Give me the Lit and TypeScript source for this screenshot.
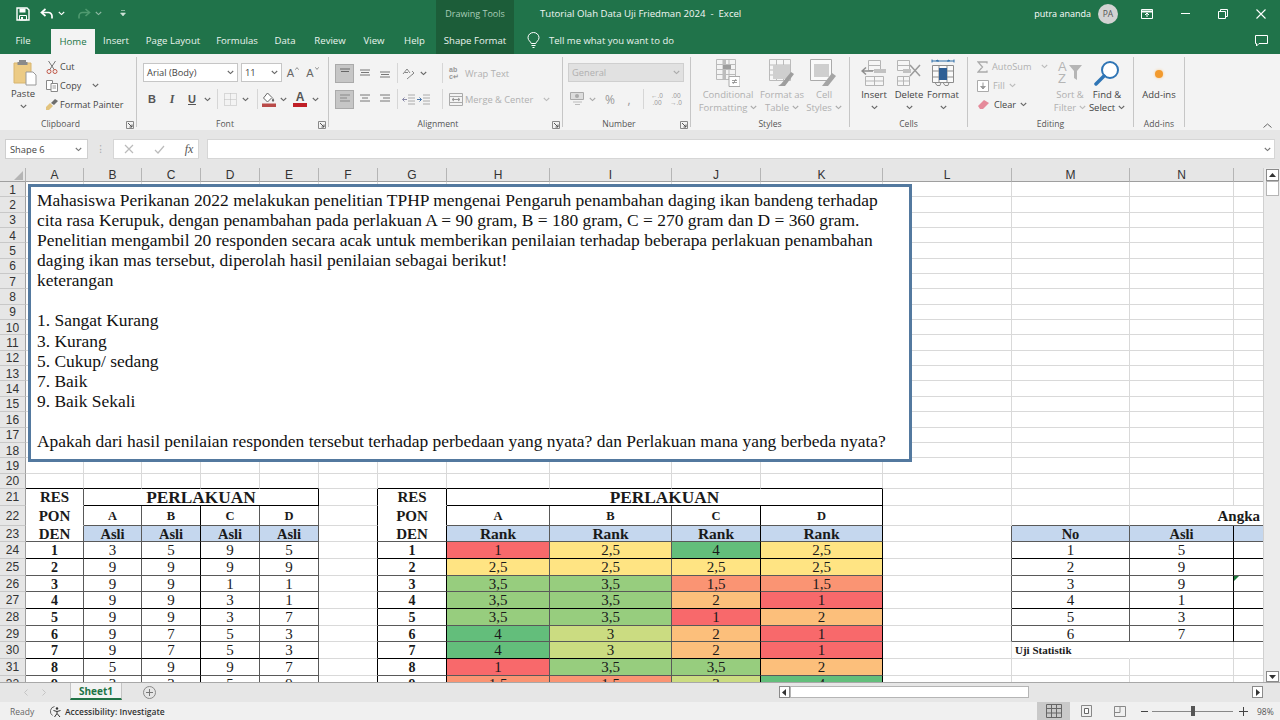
import { LitElement, html, svg, css, nothing } from 'lit';
import { customElement } from 'lit/decorators.js';

const chev = (c = '#666') => html`<svg width="7" height="5" viewBox="0 0 7 5"><path d="M.8 1l2.7 2.6L6.2 1" fill="none" stroke="${c}" stroke-width="1.1"/></svg>`;
const lines = (ys: number[], x1: number[], x2: number[], c = '#777') => html`<svg width="14" height="12" viewBox="0 0 14 12">${ys.map((y, i) => svg`<path d="M${x1[i]} ${y}H${x2[i]}" stroke="${c}" stroke-width="1"/>`)}</svg>`;
const launcher = html`<svg class="launch" width="8" height="8" viewBox="0 0 8 8"><path d="M.5 7.5V.5h7v7z" fill="none" stroke="#888"/><path d="M2 2l4 4M6 3.5V6H3.5" fill="none" stroke="#555"/></svg>`;

const ic = {
  save: html`<svg width="14" height="14" viewBox="0 0 14 14"><path d="M1 1h10l2 2v10H1z" fill="none" stroke="#fff" stroke-width="1.4"/><path d="M3.5 1.5h6v4h-6z" fill="#fff"/><path d="M3.5 8.5h7V13h-7z" fill="none" stroke="#fff"/><path d="M5 10h2v2.5H5z" fill="#fff"/></svg>`,
  undo: html`<svg width="14" height="12" viewBox="0 0 14 12"><path d="M5.5 1L1.5 4.5l4 3.5" fill="none" stroke="#fff" stroke-width="1.7"/><path d="M2 4.5h6.5a3.5 3.5 0 0 1 3.5 3.5v2.5" fill="none" stroke="#fff" stroke-width="1.7"/></svg>`,
  redo: html`<svg width="14" height="12" viewBox="0 0 14 12"><path d="M8.5 1l4 3.5-4 3.5" fill="none" stroke="#4f9a70" stroke-width="1.6"/><path d="M12 4.5H5.5A3.5 3.5 0 0 0 2 8v2.5" fill="none" stroke="#4f9a70" stroke-width="1.6"/></svg>`,
  qat: html`<svg width="6" height="7" viewBox="0 0 6 7"><path d="M1 .5h4M.5 3l2.5 3 2.5-3z" fill="#cfe3d7" stroke="#cfe3d7" stroke-width=".6"/></svg>`,
  bulb: html`<svg width="13" height="17" viewBox="0 0 13 17"><path d="M4.2 11.5C3.8 9.5 1 8.500 1 5.700A5.500 5.200 0 0 1 12 5.700C12 8.500 9.200 9.500 8.800 11.500z" fill="none" stroke="#fff" stroke-width="1"/><path d="M4.500 13.500h4M5.500 15.500h2" stroke="#fff" stroke-width="1"/></svg>`,
  ribbon: html`<svg width="12" height="10" viewBox="0 0 12 10"><path d="M.5.500h11v9H.500z" fill="none" stroke="#fff"/><path d="M.5 2.500h11" stroke="#fff" stroke-width="2"/><path d="M6 8V4.500M4 6l2-2 2 2" fill="none" stroke="#fff"/></svg>`,
  restore: html`<svg width="10" height="10" viewBox="0 0 10 10"><path d="M.5 2.500h7v7h-7zM2.500 2.500v-2h7v7h-2" fill="none" stroke="#fff"/></svg>`,
  close: html`<svg width="10" height="10" viewBox="0 0 10 10"><path d="M.5.500l9 9M9.500.500l-9 9" stroke="#fff" stroke-width="1.100"/></svg>`,
  comment: html`<svg width="13" height="12" viewBox="0 0 13 12"><path d="M.5.500h12v8H4l-2.500 2.500V8.500h-1z" fill="none" stroke="#fff"/></svg>`,
  paste: html`<svg width="24" height="27" viewBox="0 0 24 27"><path d="M1 4h17v20H1z" fill="#eccb85" stroke="#d8b56f"/><path d="M6 3h7V1H6zM4.500 3h10v3h-10z" fill="#8a8a8a"/><path d="M13 13h7l3 3v10H13z" fill="#fff" stroke="#999"/></svg>`,
  cut: html`<svg width="12" height="14" viewBox="0 0 12 14"><path d="M2.500 1l6 9M9.500 1l-6 9" stroke="#777" fill="none"/><circle cx="3" cy="11.500" r="2" fill="none" stroke="#c05a4a"/><circle cx="9" cy="11.500" r="2" fill="none" stroke="#c05a4a"/></svg>`,
  copy: html`<svg width="12" height="13" viewBox="0 0 12 13"><path d="M.5 1.500h6v9h-6z" fill="#fff" stroke="#888"/><path d="M5 4.500h6.500v8H5z" fill="#fff" stroke="#888"/><path d="M6.500 7h3.500M6.500 9h3.500" stroke="#999"/></svg>`,
  painter: html`<svg width="14" height="13" viewBox="0 0 14 13"><path d="M1 9l4-4 3 3-4 4H1z" fill="#e2c37e"/><path d="M6 5l4-4 3 2-4 4z" fill="#6d6d6d"/></svg>`,
  border: html`<svg width="13" height="13" viewBox="0 0 13 13"><path d="M.5.500h12v12H.500zM6.500.500v12M.5 6.500h12" fill="none" stroke="#bbb" stroke-dasharray="1 1"/></svg>`,
  fill: html`<svg width="14" height="15" viewBox="0 0 14 15"><path d="M5.500 1L1.500 6l4 4 4.500-4.500z" fill="#fff" stroke="#666"/><path d="M11 6c.8 1.200 1.200 2 1.200 2.600a1.100 1.100 0 0 1-2.300 0C9.900 8 10.300 7.200 11 6z" fill="#666"/><path d="M0 11.500h14V15H0z" fill="#b94a48"/></svg>`,
  sum: html`<svg width="11" height="12" viewBox="0 0 11 12"><path d="M10 2.500V1H1l4.500 5L1 11h9V9.500" fill="none" stroke="#aaa" stroke-width="1.300"/></svg>`,
  fillDown: html`<svg width="12" height="12" viewBox="0 0 12 12"><path d="M.5.500h11v11H.500z" fill="#fff" stroke="#aaa"/><path d="M6 2.500v6M3.500 6L6 9l2.500-3" fill="#999" stroke="#999"/></svg>`,
  eraser: html`<svg width="13" height="11" viewBox="0 0 13 11"><path d="M1 7l6-6 5 3-6 6H3z" fill="#e58a9a"/></svg>`,
  merge: html`<svg width="14" height="13" viewBox="0 0 14 13"><path d="M.5.500h13v12H.500zM.5 3.500h13M.5 9.500h13" fill="none" stroke="#aaa"/><path d="M3 6.500h8M9 5l2 1.500L9 8M5 5L3 6.500 5 8" fill="none" stroke="#999"/></svg>`,
  orient: html`<svg width="13" height="13" viewBox="0 0 13 13"><path d="M1 7l4-5 3 4M2.500 5.500h3.500" fill="none" stroke="#888"/><path d="M5 12l7-6M10 4l2 2-2 2" fill="none" stroke="#888"/></svg>`,
  outdent: html`<svg width="13" height="11" viewBox="0 0 13 11"><path d="M6 1h7M6 4h7M6 7h7M6 10h7" stroke="#aaa"/><path d="M5 5.500H.5M2.500 3.500l-2 2 2 2" fill="none" stroke="#8a8aa8"/></svg>`,
  indent: html`<svg width="13" height="11" viewBox="0 0 13 11"><path d="M6 1h7M6 4h7M6 7h7M6 10h7" stroke="#aaa"/><path d="M0 5.500h4.500M2.500 3.500l2 2-2 2" fill="none" stroke="#4673a8"/></svg>`,
  money: html`<svg width="15" height="14" viewBox="0 0 15 14"><path d="M.5.500h13v7H.500z" fill="#ddd" stroke="#aaa"/><circle cx="7" cy="4" r="2" fill="#aaa"/><path d="M3 10h9M5 12.500h5" stroke="#bbb"/></svg>`,
  cond: html`<svg width="24" height="28" viewBox="0 0 24 28"><path d="M.5.500h19v20H.500zM7 .5v20M13 .5v20M.5 5.500h19M.5 10.500h19M.5 15.500h19" fill="#f4f4f4" stroke="#bbb"/><path d="M7 1h3v19H7z" fill="#bdbdbd"/><path d="M7 6h8v4H7z" fill="#9d9d9d"/><path d="M13 17.500h11v10H13z" fill="#fff" stroke="#aaa"/><path d="M16 21.500h5M16 23.500h5M20 20l-3 5" fill="none" stroke="#888" stroke-width=".8"/></svg>`,
  table: html`<svg width="26" height="28" viewBox="0 0 26 28"><path d="M.5.500h21v21H.500zM.5 6h21M.5 11h21M.5 16h21M7.500 .5v21M14.500 .5v21" fill="#f6f6f6" stroke="#bbb"/><path d="M4 6h17v14H4z" fill="#cfcfcf"/><path d="M12 25l10-12 3 2-9 12H9z" fill="#9e9e9e"/></svg>`,
  cell: html`<svg width="28" height="28" viewBox="0 0 28 28"><path d="M.5.500h21v21H.500z" fill="#fafafa" stroke="#aaa"/><path d="M4 5h15v13H4z" fill="#cfcfcf"/><path d="M12 27l10-13 4 3-8 10z" fill="#a5a5a5"/></svg>`,
  insert: html`<svg width="26" height="26" viewBox="0 0 26 26"><path d="M7.500.5h12v5h-12zM7.500 5.500h12v5h-12zM4.500 16.500h18v9h-18zM13.500 16.500v9M4.500 21h18" fill="#f6f6f6" stroke="#b5b5b5"/><path d="M13 9h12v4H13z" fill="#c2c2c2"/><path d="M12 11H1M5 7.500L1 11l4 3.500" fill="none" stroke="#8d8d8d" stroke-width="1.500"/></svg>`,
  del: html`<svg width="26" height="26" viewBox="0 0 26 26"><path d="M1.500.5h12v5h-12zM1.500 5.500h12v5h-12zM1.500 16.500h12v9h-12zM7.500 16.500v9M1.500 21h12" fill="#f6f6f6" stroke="#b5b5b5"/><path d="M7 9h8v4H7z" fill="#c2c2c2"/><path d="M14 5l10 11M24 5L14 16" stroke="#9b9b9b" stroke-width="1.500"/></svg>`,
  format: html`<svg width="24" height="28" viewBox="0 0 24 28"><path d="M1 2h22M1 .5v3M23 .5v3M5 2l2-1v2M19 2l-2-1v2" fill="none" stroke="#2f6ea8"/><path d="M1.500 6.500h21v17h-21zM8 6.500v17M16 6.500v17M1.500 12h21M1.500 18h21" fill="#fafafa" stroke="#8d8d8d"/><path d="M8 9h8v12H8z" fill="#2f5f94"/><path d="M4 23.500l2 3h3l1-3M12 23.500l2 3h3l1-3" fill="none" stroke="#8d8d8d"/></svg>`,
  funnel: html`<svg width="13" height="15" viewBox="0 0 13 15"><path d="M0 0h13L8 6v9L5 13V6z" fill="#b5b5b5"/></svg>`,
  find: html`<svg width="26" height="26" viewBox="0 0 26 26"><circle cx="16" cy="10" r="8" fill="#fff" stroke="#2f75b5" stroke-width="2"/><path d="M10 16L2 24" stroke="#2f75b5" stroke-width="3.500" stroke-linecap="round"/></svg>`,
  access: html`<svg width="13" height="13" viewBox="0 0 13 13"><path d="M5.500 1.500a5 5 0 0 0-2 9" fill="none" stroke="#666"/><circle cx="8" cy="3.500" r="1.200" fill="#333"/><path d="M4.500 5.500l3.500 1 3.500-1M8 6.500v2l-2.500 3.500M8 8.500l3 3.500" fill="none" stroke="#333"/></svg>`,
  grid: html`<svg width="16" height="14" viewBox="0 0 16 14"><path d="M.5.500h15v13H.500zM5.500 .5v13M10.500 .5v13M.5 4.500h15M.5 9h15" fill="none" stroke="#666"/></svg>`,
  pageView: html`<svg width="11" height="12" viewBox="0 0 11 12"><path d="M.5.500h10v11H.500z" fill="none" stroke="#888"/><path d="M3.500 3.500h4v5h-4z" fill="#fff" stroke="#666"/></svg>`,
  breakView: html`<svg width="12" height="11" viewBox="0 0 12 11"><path d="M.5.500h11v10H.500zM6 .5v6M.5 6.500H6" fill="none" stroke="#888"/></svg>`,
  caretUp: html`<svg width="4" height="3" viewBox="0 0 4 3"><path d="M.3 2.700L2 .6l1.700 2.100" fill="none" stroke="#777" stroke-width=".8"/></svg>`,
  caretDown: html`<svg width="4" height="3" viewBox="0 0 4 3"><path d="M.3.300L2 2.400 3.700.300" fill="none" stroke="#777" stroke-width=".8"/></svg>`,
};

const COLS = ['A', 'B', 'C', 'D', 'E', 'F', 'G', 'H', 'I', 'J', 'K', 'L', 'M', 'N', ''];

type Cell = { t?: string; cls?: string; span?: number };

const T1: number[][] = [
  [3, 5, 9, 5], [9, 9, 9, 9], [9, 9, 1, 1], [9, 9, 3, 1], [9, 9, 3, 7], [9, 7, 5, 3], [9, 7, 5, 3], [5, 9, 9, 7], [3, 3, 5, 9],
];
const T2: string[][] = [
  ['1', '2,5', '4', '2,5'], ['2,5', '2,5', '2,5', '2,5'], ['3,5', '3,5', '1,5', '1,5'], ['3,5', '3,5', '2', '1'],
  ['3,5', '3,5', '1', '2'], ['4', '3', '2', '1'], ['4', '3', '2', '1'], ['1', '3,5', '3,5', '2'], ['1,5', '1,5', '3', '4'],
];
const T3: [number, number][] = [[1, 5], [2, 9], [3, 9], [4, 1], [5, 3], [6, 7]];
const RANK: Record<string, string> = { '1': 'r1', '1,5': 'r15', '2': 'r2', '2,5': 'r25', '3': 'r3', '3,5': 'r35', '4': 'r4' };

const blackRows = [24, 27, 30];
// border under a data row: some rows come out black at this zoom, others grey
const under = (r: number) => (blackRows.includes(r) ? 'bb' : 'bg');
const rightT1 = ['vg', 'vg', 'vb', 'vg', 'vg'];
const rightT2 = ['vb', 'vg', 'vg', 'vb', 'vb'];

function buildRow(r: number): Cell[] {
  const row: Cell[] = [];
  if (r <= 20) {
    COLS.forEach((_, i) => row.push({ cls: r === 20 && ((i >= 0 && i <= 4) || (i >= 6 && i <= 10)) ? 'bb' : '' }));
    return row;
  }
  // table 1 and table 2 share their row shape
  const left = (offset: number, rights: string[], body: (c: number, idx: number) => Cell) => {
    const idx = r - 24;
    if (r === 21) {
      row.push({ t: 'RES', cls: `head ${rights[0]}` });
      row.push({ t: 'PERLAKUAN', cls: 'title bb vb', span: 4 });
    } else if (r === 22 || r === 23) {
      row.push({ t: r === 22 ? 'PON' : 'DEN', cls: `head ${rights[0]} ${r === 23 ? 'bg' : ''}` });
      ['A', 'B', 'C', 'D'].forEach((l, c) => {
        row.push(r === 22
          ? { t: l, cls: `sub bg ${rights[c + 1]}` }
          : { t: offset === 0 ? 'Asli' : 'Rank', cls: `blue bg ${offset === 0 ? '' : 'rank'} ${rights[c + 1]}` });
      });
    } else {
      row.push({ t: String(idx + 1), cls: `idx ${under(r)} ${rights[0]}` });
      for (let c = 0; c < 4; c++) row.push(body(c, idx));
    }
  };
  left(0, rightT1, (c, idx) => ({ t: String(T1[idx][c]), cls: `val ${under(r)} ${rightT1[c + 1]}` }));
  row.push({ cls: 'vb' }); // F, closes on the left edge of table 2
  left(1, rightT2, (c, idx) => {
    const v = T2[idx][c];
    return { t: v, cls: `val ${RANK[v]} ${under(r)} ${rightT2[c + 1]}` };
  });
  // L and the small table
  const inT3 = r >= 23 && r <= 29;
  row.push({ cls: inT3 ? 'vg' : '' });
  if (r === 22) {
    row.push({ cls: 'bg' });
    row.push({ t: 'Angka', cls: 'angka bg', span: 2 });
  } else if (r === 23) {
    row.push({ t: 'No', cls: 'blue bg vg' });
    row.push({ t: 'Asli', cls: 'blue bg vb' });
    row.push({ cls: 'blue bg' });
  } else if (inT3) {
    const d = T3[r - 24];
    const u = under(r);
    row.push({ t: String(d[0]), cls: `val ${u} vg` });
    row.push({ t: String(d[1]), cls: `val ${u} vb` });
    row.push({ cls: `${u} ${r === 26 ? 'flag' : ''}` });
  } else if (r === 30) {
    row.push({ t: 'Uji Statistik', cls: 'note nr' });
    row.push({});
    row.push({});
  } else {
    row.push({});
    row.push({});
    row.push({});
  }
  return row;
}

@customElement('app-root')
export class AppRoot extends LitElement {
  static styles = css`
    :host {
      display: block;
      width: 1280px;
      height: 720px;
      overflow: hidden;
      background: #e6e6e6;
      font-family: 'Open Sans', 'Noto Sans', sans-serif;
      font-size: 9.500px;
      color: #444;
    }
    svg { display: block; flex: none; }

    /* title bar + tabs */
    .top { background: #20734a; color: #fff; height: 54px; display: grid; grid-template-rows: 27px 27px; }
    .bar { display: flex; align-items: center; }
    .qat { display: flex; align-items: center; padding-left: 16px; width: 436px; box-sizing: border-box; }
    .qat .save { margin-right: 10px; }
    .qat .c1 { margin: 0 12px 0 4px; }
    .qat .c2 { margin: 0 18px 0 4px; opacity: .5; }
    .context { width: 78px; height: 100%; background: #1c5d39; display: flex; align-items: center; justify-content: center; color: #a9cdb8; font-size: 9px; }
    .doc { margin-left: 26px; font-size: 9.600px; white-space: pre; flex: 1; color: #f2f7f4; }
    .user { font-size: 9px; margin-right: 7px; }
    .avatar { width: 20px; height: 20px; border-radius: 50%; background: #d3d3d3; color: #555; display: flex; align-items: center; justify-content: center; font-size: 8.500px; margin-right: 10px; }
    .winbtn { width: 38px; display: flex; justify-content: center; align-items: center; }
    .winbtn.min i { display: block; width: 9px; height: 1px; background: #fff; }
    .tab { height: 100%; display: flex; align-items: center; justify-content: center; color: #eaf3ee; font-size: 9.600px; flex: none; }
    .tab.t-file { width: 51px; padding-right: 5px; box-sizing: border-box; }
    .tab.t-home { width: 44px; height: 25px; margin-top: 2px; background: #f3f3f3; color: #217346; }
    .tab.t-ins { width: 42px; } .tab.t-pl { width: 72px; } .tab.t-for { width: 56px; }
    .tab.t-data { width: 40px; } .tab.t-rev { width: 50px; } .tab.t-view { width: 38px; } .tab.t-help { width: 43px; }
    .tab.t-sf { width: 78px; background: #1c5d39; }
    .tell { display: flex; align-items: center; gap: 9px; margin-left: 13px; flex: 1; color: #eaf3ee; font-size: 9.500px; }
    .comment { margin-right: 12px; }

    /* ribbon */
    .ribbon { height: 76px; background: #f3f3f3; display: flex; align-items: flex-start; padding-top: 3px; box-sizing: border-box; }
    .group { height: 70px; display: grid; grid-template-columns: minmax(0, 1fr); grid-template-rows: 61px 9px; border-right: 1px solid #c6c6c6; box-sizing: border-box; flex: none; }
    .g-clip { width: 137px; } .g-font { width: 192px; } .g-align { width: 234px; } .g-num { width: 128px; } .g-style { width: 159px; } .g-cells { width: 118px; } .g-edit { width: 166px; } .g-add { width: 51px; }
    .label { display: grid; grid-template-columns: 1fr auto 1fr; line-height: 13px; font-size: 8.600px; color: #555; align-items: center; height: 13px; }
    .label span { grid-column: 2; }
    .label.has { grid-template-columns: 1fr 15px; }
    .label.has span { grid-column: 1; text-align: center; }
    .launch { justify-self: end; margin-right: 2px; }
    .off { color: #b0b0b0; }

    .clip { display: flex; padding-left: 9px; }
    .paste { width: 28px; display: flex; flex-direction: column; align-items: center; padding-top: 2px; line-height: 13px; }
    .paste svg:first-child { margin-bottom: 1px; margin-left: 3px; }
    .paste svg:last-child { margin-top: 4px; }
    .clip-list { margin-left: 7px; display: grid; grid-auto-rows: 19px; align-items: center; font-size: 9.100px; }
    .clip-item { display: flex; align-items: center; gap: 1px; white-space: nowrap; }
    .clip-item .i { width: 15px; display: flex; justify-content: center; }
    .clip-item .cw { margin-left: 10px; }

    .rows { display: grid; grid-template-rows: 19px 19px; row-gap: 7px; padding-top: 6px; }
    .r { display: grid; align-items: center; justify-items: center; height: 19px; }
    .combo { background: #fff; border: 1px solid #c6c6c6; height: 19px; box-sizing: border-box; display: flex; align-items: center; justify-content: space-between; padding: 0 3px; font-size: 9.300px; width: 100%; }
    .font-r1 { grid-template-columns: 95px 3px 41px 1px 20px 19px; padding-left: 6px; }
    .font-r2 { grid-template-columns: 20px 20px 20px 10px 10px 16px 14px 10px 14px 14px 20px 10px; padding-left: 5px; }
    .grow { font-family: 'Liberation Sans', sans-serif; font-size: 11px; color: #666; display: flex; align-items: flex-start; gap: 1px; }
    .fb { font-family: 'Liberation Sans', sans-serif; font-size: 11px; font-weight: 700; color: #555; }
    .fi { font-family: 'Liberation Serif', serif; font-size: 12px; font-weight: 700; font-style: italic; color: #555; }
    .fu { font-family: 'Liberation Sans', sans-serif; font-size: 11px; font-weight: 700; color: #555; text-decoration: underline; }
    .fa { font-family: 'Liberation Sans', sans-serif; font-size: 12px; font-weight: 700; color: #555; line-height: 11px; width: 14px; text-align: center; border-bottom: 4px solid #c01f26; }
    .vsep { width: 1px; height: 20px; background: #d6d6d6; }
    .vsep.end { justify-self: end; }

    .al-r { grid-template-columns: 20px 20px 20px 4px 18px 12px 14px 1fr; padding-left: 6px; }
    .al-active { width: 19px; height: 19px; background: #c6c6c6; border: 1px solid #aaa; box-sizing: border-box; display: flex; align-items: center; justify-content: center; justify-self: start; }
    .al-wide { display: flex; align-items: center; justify-self: start; gap: 2px; color: #b0b0b0; font-size: 9.300px; margin-left: 6px; white-space: nowrap; }
    .al-wide .cw { margin-left: 8px; }
    .ab { font-family: 'Liberation Sans', sans-serif; font-size: 7px; line-height: 7px; width: 14px; color: #999; font-weight: 700; }
    .num-box { margin: 0 6px 0 5px; background: #e1e1e1; border: 1px solid #cfcfcf; height: 19px; box-sizing: border-box; display: flex; align-items: center; justify-content: space-between; padding: 0 3px; font-size: 9.300px; color: #b0b0b0; }
    .num-r { grid-template-columns: 16px 14px 22px 16px 12px 16px 22px; padding-left: 6px; color: #aaa; }
    .pct { font-size: 12px; color: #999; }
    .dec { font-size: 6.500px; line-height: 7px; color: #999; text-align: center; font-family: 'Liberation Sans', sans-serif; }

    .bigs { display: flex; }
    .big { display: flex; flex-direction: column; align-items: center; flex: none; }
    .big .ico { height: 31px; display: flex; align-items: center; justify-content: center; }
    .big .txt { line-height: 13px; text-align: center; white-space: nowrap; display: flex; align-items: center; justify-content: center; gap: 3px; height: 13px; }
    .g-style .bigs { padding-left: 10px; }
    .b-cond { width: 54px; } .b-tab { width: 54px; } .b-cell { width: 30px; }
    .g-cells .bigs { padding-left: 6px; }
    .b-ins { width: 36px; } .b-del { width: 34px; } .b-fmt { width: 34px; }
    .edit { display: flex; }
    .edit-list { width: 84px; padding-left: 9px; display: grid; grid-auto-rows: 19px; align-items: center; box-sizing: border-box; font-size: 9.200px; }
    .edit-item { display: flex; align-items: center; gap: 4px; white-space: nowrap; }
    .edit-item .cw { margin-left: 6px; }
    .b-sort { width: 36px; } .b-find { width: 38px; }
    .sort { display: flex; align-items: center; gap: 1px; color: #b5b5b5; }
    .az { font-family: 'Liberation Sans', sans-serif; font-size: 13px; line-height: 12px; width: 10px; }
    .dot { width: 8px; height: 8px; border-radius: 50%; background: #f29a2e; box-shadow: 0 0 3px #f9c98a; margin-top: 3px; }
    .g-add .big { width: 50px; }
    .collapse { margin-left: auto; margin-right: 8px; align-self: flex-end; margin-bottom: 2px; }

    /* formula bar */
    .fbar { height: 38px; padding: 8px 5px; box-sizing: border-box; display: flex; align-items: center; background: #e6e6e6; }
    .name { width: 83px; height: 20px; background: #fff; border: 1px solid #cfcfcf; box-sizing: border-box; display: flex; align-items: center; justify-content: space-between; padding: 0 5px 0 4px; font-size: 9.300px; }
    .dots { width: 25px; text-align: center; color: #aaa; font-size: 10px; }
    .fx { width: 86px; height: 20px; background: #fff; border: 1px solid #d6d6d6; box-sizing: border-box; display: grid; grid-template-columns: 30px 30px 30px; justify-items: center; align-items: center; color: #aaa; }
    .fx i { font-family: 'Liberation Serif', serif; color: #555; font-size: 12px; }
    .input { flex: 1; height: 20px; margin-left: 8px; background: #fff; border: 1px solid #d6d6d6; box-sizing: border-box; display: flex; align-items: center; justify-content: flex-end; padding-right: 3px; }

    /* sheet */
    .work { display: flex; height: 514px; }
    .viewport { width: 1263px; height: 514px; overflow: hidden; position: relative; background: #fff; }
    .sheet {
      display: grid;
      grid-template-columns: 26px 58px 58px 59px 59px 59px 59px 69px 103px 122px 89px 122px 129px 118px 104px 30px;
      grid-template-rows: 14px repeat(20, 15.35px) 17px 20px 16px 17px 17px 16px 17px 17px 16px 17px 17px 17px;
      font-family: 'Liberation Serif', serif;
      color: #1a1a1a;
    }
    .corner, .ch, .rh { background: #e6e6e6; font-family: 'Liberation Sans', sans-serif; color: #333; font-size: 12px; line-height: 12px; display: flex; align-items: center; justify-content: center; box-sizing: border-box; overflow: hidden; }
    .corner { border-right: 1px solid #b5b5b5; border-bottom: 1px solid #9f9f9f; align-items: flex-end; justify-content: flex-end; }
    .corner::after { content: ''; border-style: solid; border-width: 0 0 9px 9px; border-color: transparent transparent #b5b5b5 transparent; margin: 0 2px 1px 0; }
    .ch { border-right: 1px solid #b5b5b5; border-bottom: 1px solid #9f9f9f; }
    .rh { border-right: 1px solid #9f9f9f; border-bottom: 1px solid #c8c8c8; padding-top: 1px; }
    .c {
      box-sizing: border-box;
      border-right: 1px solid #d9d9d9;
      border-bottom: 1px solid #d9d9d9;
      background: #fff;
      display: flex;
      align-items: center;
      justify-content: center;
      overflow: hidden;
      white-space: nowrap;
      position: relative;
      padding-top: 2px;
      line-height: 13px;
    }
    .bb { border-bottom-color: #000; }
    .bg { border-bottom-color: #595959; }
    .vb { border-right-color: #000; }
    .vg { border-right-color: #595959; }
    .nr { border-right-color: transparent; }
    .head { font-weight: 700; font-size: 15px; border-bottom-color: #fff; }
    .head.bg { border-bottom-color: #595959; }
    .title { font-weight: 700; font-size: 17.300px; }
    .sub { font-weight: 700; font-size: 12.500px; }
    .blue { background: #c5d7ee; font-weight: 700; font-size: 14.500px; }
    .blue.rank { font-size: 15.500px; padding-top: 0; }
    .idx { font-weight: 700; font-size: 14px; }
    .val { font-size: 15px; }
    .angka { font-weight: 700; font-size: 15px; justify-content: flex-end; padding-right: 3px; border-right-color: transparent; }
    .note { font-weight: 700; font-size: 11px; justify-content: flex-start; padding-left: 3px; overflow: visible; }
    .flag::before { content: ''; position: absolute; top: 0; left: 0; border-style: solid; border-width: 5px 5px 0 0; border-color: #1f7a3d transparent transparent transparent; }
    .r1 { background: #f8696b; } .r15 { background: #fa9473; } .r2 { background: #fcbf7b; } .r25 { background: #ffe483; }
    .r3 { background: #cbdc81; } .r35 { background: #97cd7e; } .r4 { background: #63be7b; }

    .shape {
      position: absolute;
      left: 28px;
      top: 16px;
      width: 884px;
      height: 278px;
      box-sizing: border-box;
      border: 3px solid #53799f;
      background: #fff;
      padding: 3px 6px;
      font-family: 'Liberation Serif', serif;
      font-size: 17.450px;
      line-height: 20.080px;
      color: #111;
      white-space: pre-line;
    }

    .vscroll { width: 17px; background: #ececec; display: flex; flex-direction: column; align-items: center; border-left: 1px solid #d0d0d0; box-sizing: border-box; }
    .sbtn { width: 13px; height: 12px; background: #fff; border: 1px solid #8a8a8a; box-sizing: border-box; display: flex; align-items: center; justify-content: center; flex: none; margin-top: 1px; }
    .thumb { width: 13px; height: 15px; background: #fff; border: 1px solid #b5b5b5; box-sizing: border-box; }
    .vscroll .spacer { flex: 1; }
    .vscroll .sbtn:last-child { margin: 0; height: 11px; }

    /* sheet tabs */
    .tabsbar { height: 20px; background: #e6e6e6; border-top: 1px solid #a8a8a8; box-sizing: border-box; display: flex; align-items: flex-start; }
    .nav { width: 70px; display: flex; justify-content: center; gap: 14px; padding-top: 6px; box-sizing: border-box; }
    .sheettab { width: 52px; height: 17px; background: #f3f3f3; color: #217346; font-weight: 700; font-size: 10px; display: flex; align-items: center; justify-content: center; border-bottom: 2px solid #217346; border-left: 1px solid #c4c4c4; border-right: 1px solid #c4c4c4; box-sizing: border-box; }
    .plus { width: 13px; height: 13px; margin: 3px 0 0 21px; }
    .hfill { flex: 1; }
    .hscroll { display: flex; align-items: center; height: 12px; margin-top: 3px; width: 484px; margin-right: 17px; }
    .hbtn { width: 11px; height: 12px; background: #fff; border: 1px solid #8a8a8a; box-sizing: border-box; display: flex; align-items: center; justify-content: center; flex: none; }
    .hthumb { width: 239px; height: 12px; background: #fff; border: 1px solid #b5b5b5; box-sizing: border-box; }

    /* status bar */
    .status { height: 18px; background: #f0f0f0; display: flex; align-items: center; font-size: 8.500px; color: #666; }
    .ready { margin-left: 10px; width: 39px; }
    .acc { display: flex; align-items: center; gap: 3px; color: #333; font-weight: 600; font-size: 8.500px; flex: 1; }
    .view { width: 33px; height: 18px; display: flex; align-items: center; justify-content: center; flex: none; }
    .view.on { background: #c9c9c9; }
    .zoom { display: flex; align-items: center; margin-left: 5px; color: #555; }
    .minus { width: 7px; height: 1px; background: #444; margin-right: 4px; }
    .track { width: 81px; height: 1px; background: #888; display: flex; justify-content: center; align-items: center; }
    .track i { width: 4px; height: 10px; background: #555; display: block; }
    .pl { width: 9px; height: 9px; margin: 0 9px 0 6px; }
    .pctz { width: 23px; }
  `;

  render() {
    const rows = Array.from({ length: 32 }, (_, i) => i + 1);
    return html`
      <div class="top">
        <div class="bar">
          <div class="qat">
            <span class="save">${ic.save}</span>${ic.undo}<span class="c1">${chev('#fff')}</span>${ic.redo}<span class="c2">${chev('#fff')}</span>${ic.qat}
          </div>
          <div class="context">Drawing Tools</div>
          <div class="doc">Tutorial Olah Data Uji Friedman 2024  -  Excel</div>
          <div class="user">putra ananda</div>
          <div class="avatar">PA</div>
          <div class="winbtn">${ic.ribbon}</div>
          <div class="winbtn min"><i></i></div>
          <div class="winbtn">${ic.restore}</div>
          <div class="winbtn">${ic.close}</div>
        </div>
        <div class="bar">
          <div class="tab t-file">File</div>
          <div class="tab t-home">Home</div>
          <div class="tab t-ins">Insert</div>
          <div class="tab t-pl">Page Layout</div>
          <div class="tab t-for">Formulas</div>
          <div class="tab t-data">Data</div>
          <div class="tab t-rev">Review</div>
          <div class="tab t-view">View</div>
          <div class="tab t-help">Help</div>
          <div class="tab t-sf">Shape Format</div>
          <div class="tell">${ic.bulb}<span>Tell me what you want to do</span></div>
          <div class="comment">${ic.comment}</div>
        </div>
      </div>
      ${this.renderRibbon()}
      <div class="fbar">
        <div class="name"><span>Shape 6</span>${chev('#777')}</div>
        <div class="dots">⁝</div>
        <div class="fx">
          <svg width="10" height="10" viewBox="0 0 10 10"><path d="M1 1l8 8M9 1L1 9" stroke="#bbb" stroke-width="1.200"/></svg>
          <svg width="11" height="9" viewBox="0 0 11 9"><path d="M1 5l3 3 6-7" fill="none" stroke="#bbb" stroke-width="1.200"/></svg>
          <i>fx</i>
        </div>
        <div class="input">${chev('#777')}</div>
      </div>
      <div class="work">
        <div class="viewport">
          <div class="sheet">
            <div class="corner"></div>
            ${COLS.map((c) => html`<div class="ch">${c}</div>`)}
            ${rows.map((r) => html`
              <div class="rh">${r}</div>
              ${buildRow(r).map((c) => html`<div class="c ${c.cls ?? ''}" style=${c.span ? `grid-column: span ${c.span}` : nothing}>${c.t ?? ''}</div>`)}
            `)}
          </div>
          <div class="shape">Mahasiswa Perikanan 2022 melakukan penelitian TPHP mengenai Pengaruh penambahan daging ikan bandeng terhadap
cita rasa Kerupuk, dengan penambahan pada perlakuan A = 90 gram, B = 180 gram, C = 270 gram dan D = 360 gram.
Penelitian mengambil 20 responden secara acak untuk memberikan penilaian terhadap beberapa perlakuan penambahan
daging ikan mas tersebut, diperolah hasil penilaian sebagai berikut!
keterangan

1. Sangat Kurang
3. Kurang
5. Cukup/ sedang
7. Baik
9. Baik Sekali

Apakah dari hasil penilaian responden tersebut terhadap perbedaan yang nyata? dan Perlakuan mana yang berbeda nyata?</div>
        </div>
        <div class="vscroll">
          <div class="sbtn"><svg width="7" height="4" viewBox="0 0 7 4"><path d="M3.500 0L7 4H0z" fill="#333"/></svg></div>
          <div class="thumb"></div>
          <div class="spacer"></div>
          <div class="sbtn"><svg width="7" height="4" viewBox="0 0 7 4"><path d="M3.500 4L7 0H0z" fill="#333"/></svg></div>
        </div>
      </div>
      <div class="tabsbar">
        <div class="nav">
          <svg width="4" height="7" viewBox="0 0 4 7"><path d="M3.500.5L.5 3.500l3 3" fill="none" stroke="#c4c4c4"/></svg>
          <svg width="4" height="7" viewBox="0 0 4 7"><path d="M.5.500l3 3-3 3" fill="none" stroke="#c4c4c4"/></svg>
        </div>
        <div class="sheettab">Sheet1</div>
        <svg class="plus" viewBox="0 0 13 13"><circle cx="6.500" cy="6.500" r="6" fill="none" stroke="#888"/><path d="M6.500 3v7M3 6.500h7" stroke="#777"/></svg>
        <div class="hfill"></div>
        <div class="hscroll">
          <div class="hbtn"><svg width="5" height="7" viewBox="0 0 5 7"><path d="M4 0v7L0 3.500z" fill="#333"/></svg></div>
          <div class="hthumb"></div>
          <div class="hfill"></div>
          <div class="hbtn"><svg width="5" height="7" viewBox="0 0 5 7"><path d="M1 0v7l4-3.500z" fill="#333"/></svg></div>
        </div>
      </div>
      <div class="status">
        <div class="ready">Ready</div>
        <div class="acc">${ic.access}<span>Accessibility: Investigate</span></div>
        <div class="view on">${ic.grid}</div>
        <div class="view">${ic.pageView}</div>
        <div class="view">${ic.breakView}</div>
        <div class="zoom">
          <div class="minus"></div>
          <div class="track"><i></i></div>
          <svg class="pl" viewBox="0 0 9 9"><path d="M4.500 0v9M0 4.500h9" stroke="#444"/></svg>
          <div class="pctz">98%</div>
        </div>
      </div>
    `;
  }

  renderRibbon() {
    return html`
      <div class="ribbon">
        <div class="group g-clip">
          <div class="clip">
            <div class="paste">${ic.paste}<span>Paste</span>${chev()}</div>
            <div class="clip-list">
              <div class="clip-item"><span class="i">${ic.cut}</span>Cut</div>
              <div class="clip-item"><span class="i">${ic.copy}</span>Copy<span class="cw">${chev()}</span></div>
              <div class="clip-item"><span class="i">${ic.painter}</span>Format Painter</div>
            </div>
          </div>
          <div class="label has"><span>Clipboard</span>${launcher}</div>
        </div>

        <div class="group g-font">
          <div class="rows">
            <div class="r font-r1">
              <div class="combo"><span>Arial (Body)</span>${chev()}</div><span></span>
              <div class="combo"><span>11</span>${chev()}</div><span></span>
              <span class="grow">A${ic.caretUp}</span><span class="grow">A${ic.caretDown}</span>
            </div>
            <div class="r font-r2">
              <span class="fb">B</span><span class="fi">I</span><span class="fu">U</span>${chev()}<i class="vsep"></i>
              ${ic.border}${chev()}<i class="vsep"></i>${ic.fill}${chev()}<span class="fa">A</span>${chev()}
            </div>
          </div>
          <div class="label has"><span>Font</span>${launcher}</div>
        </div>

        <div class="group g-align">
          <div class="rows">
            <div class="r al-r">
              <div class="al-active">${lines([2, 4.500], [2, 3], [12, 11], '#666')}</div>
              ${lines([3, 5.500, 8], [2, 3, 2], [12, 11, 12])}${lines([5, 7.500, 10], [2, 3, 2], [12, 11, 12])}
              <i class="vsep"></i>${ic.orient}${chev()}<i class="vsep end"></i>
              <div class="al-wide"><span class="ab">ab<br />c↵</span><span>Wrap Text</span></div>
            </div>
            <div class="r al-r">
              <div class="al-active">${lines([2, 5, 8], [2, 2, 2], [12, 9, 12], '#888')}</div>
              ${lines([2, 5, 8], [2, 4, 2], [12, 10, 12])}${lines([2, 5, 8], [2, 5, 2], [12, 12, 12])}
              <i class="vsep"></i>${ic.outdent}${ic.indent}<i class="vsep end"></i>
              <div class="al-wide">${ic.merge}<span>Merge &amp; Center</span><span class="cw">${chev('#bbb')}</span></div>
            </div>
          </div>
          <div class="label has"><span>Alignment</span>${launcher}</div>
        </div>

        <div class="group g-num">
          <div class="rows">
            <div class="num-box"><span>General</span>${chev('#aaa')}</div>
            <div class="r num-r">
              ${ic.money}${chev('#aaa')}<span class="pct">%</span><span class="pct">,</span><i class="vsep"></i>
              <span class="dec">←.0<br />.00</span><span class="dec">.00<br />→.0</span>
            </div>
          </div>
          <div class="label has"><span>Number</span>${launcher}</div>
        </div>

        <div class="group g-style">
          <div class="bigs off">
            <div class="big b-cond"><div class="ico">${ic.cond}</div><div class="txt">Conditional</div><div class="txt">Formatting ${chev('#aaa')}</div></div>
            <div class="big b-tab"><div class="ico">${ic.table}</div><div class="txt">Format as</div><div class="txt">Table ${chev('#aaa')}</div></div>
            <div class="big b-cell"><div class="ico">${ic.cell}</div><div class="txt">Cell</div><div class="txt">Styles ${chev('#aaa')}</div></div>
          </div>
          <div class="label"><span>Styles</span></div>
        </div>

        <div class="group g-cells">
          <div class="bigs">
            <div class="big b-ins"><div class="ico">${ic.insert}</div><div class="txt">Insert</div><div class="txt">${chev()}</div></div>
            <div class="big b-del"><div class="ico">${ic.del}</div><div class="txt">Delete</div><div class="txt">${chev()}</div></div>
            <div class="big b-fmt"><div class="ico">${ic.format}</div><div class="txt">Format</div><div class="txt">${chev()}</div></div>
          </div>
          <div class="label"><span>Cells</span></div>
        </div>

        <div class="group g-edit">
          <div class="edit">
            <div class="edit-list">
              <div class="edit-item off">${ic.sum}<span>AutoSum</span><span class="cw">${chev('#bbb')}</span></div>
              <div class="edit-item off">${ic.fillDown}<span>Fill</span>${chev('#bbb')}</div>
              <div class="edit-item">${ic.eraser}<span>Clear</span>${chev()}</div>
            </div>
            <div class="big b-sort off"><div class="ico"><div class="sort"><span class="az">A<br />Z</span>${ic.funnel}</div></div><div class="txt">Sort &amp;</div><div class="txt">Filter ${chev('#bbb')}</div></div>
            <div class="big b-find"><div class="ico">${ic.find}</div><div class="txt">Find &amp;</div><div class="txt">Select ${chev()}</div></div>
          </div>
          <div class="label"><span>Editing</span></div>
        </div>

        <div class="group g-add">
          <div class="big"><div class="ico"><i class="dot"></i></div><div class="txt">Add-ins</div></div>
          <div class="label"><span>Add-ins</span></div>
        </div>

        <svg class="collapse" width="9" height="5" viewBox="0 0 9 5"><path d="M.5 4.500l4-3.500 4 3.500" fill="none" stroke="#666"/></svg>
      </div>
    `;
  }
}
